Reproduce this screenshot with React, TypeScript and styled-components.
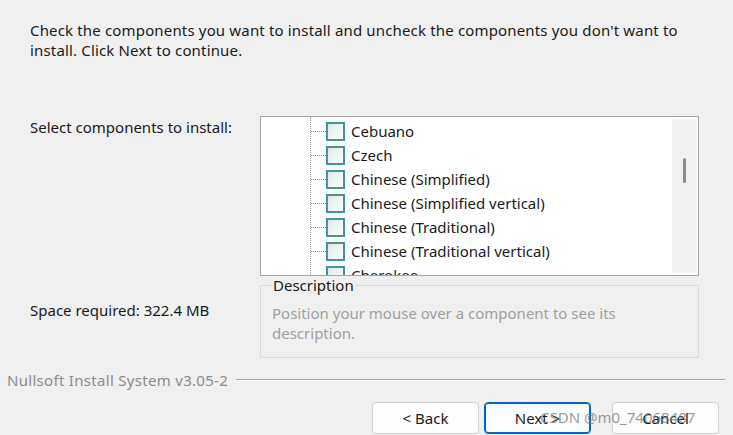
import * as React from 'react';
import styled, { createGlobalStyle } from 'styled-components';

const GlobalStyle = createGlobalStyle`
  html, body {
    margin: 0;
    padding: 0;
    background: #f0f0f0;
  }
  * {
    box-sizing: border-box;
  }
`;

const Window = styled.div`
  position: relative;
  width: 733px;
  height: 435px;
  overflow: hidden;
  background: #f0f0f0;
  font-family: 'Noto Sans', 'Liberation Sans', Arial, sans-serif;
  font-size: 15px;
  color: #1a1a1a;
`;

const Intro = styled.p`
  margin: 0;
  padding: 20px 40px 0 30px;
  line-height: 20px;
  letter-spacing: 0.16px;
`;

const Components = styled.div`
  display: grid;
  grid-template-columns: 230px 439px;
  grid-template-rows: 160px 82px;
  margin: 56px 0 0 30px;
`;

const SideLabel = styled.div<{ $top: number }>`
  padding-top: ${(p) => p.$top}px;
  line-height: 20px;
`;

const ListBox = styled.div`
  display: flex;
  border: 1px solid #a5a5a5;
  background: #ffffff;
  overflow: hidden;
`;

const Tree = styled.div`
  flex: 1;
  position: relative;
  padding: 2px 0 0 0;
`;

const TreeTrunk = styled.div`
  position: absolute;
  left: 49px;
  top: 0;
  bottom: 0;
  border-left: 1px dotted #9a9a9a;
`;

const Row = styled.div`
  display: flex;
  align-items: center;
  height: 24px;
  padding-left: 50px;
  white-space: nowrap;
`;

const Branch = styled.span`
  width: 15px;
  border-top: 1px dotted #9a9a9a;
`;

const Check = styled.span`
  width: 19px;
  height: 19px;
  border: 2px solid #3a9c96;
  background: linear-gradient(135deg, #e4e4e4 0%, #f4f4f4 55%, #ffffff 100%);
  margin-right: 6px;
  flex-shrink: 0;
`;

const ScrollTrack = styled.div`
  width: 25px;
  margin: 2px 1px 2px 0;
  background: #f0f0f0;
  display: flex;
  justify-content: center;
  padding-top: 39px;
`;

const ScrollThumb = styled.div`
  width: 3px;
  height: 25px;
  border-radius: 2px;
  background: #8a8a8a;
`;

const DescriptionBox = styled.fieldset`
  margin: 0;
  padding: 11px 11px 0 11px;
  border: 1px solid #dadada;
  border-radius: 1px;
  min-width: 0;
`;

const Legend = styled.legend`
  padding: 0 1px;
  margin-left: 0;
  line-height: 18px;
  color: #1a1a1a;
`;

const DescriptionText = styled.div`
  color: #a0a0a0;
  line-height: 20px;
  margin-top: -2px;
`;

const BrandRow = styled.div`
  display: flex;
  align-items: center;
  gap: 8px;
  margin: 12px 8px 0 7px;
  color: #8c8c8c;
  line-height: 20px;
  letter-spacing: 0.3px;
  white-space: nowrap;
`;

const Rule = styled.span`
  flex: 1;
  height: 2px;
  border-top: 1px solid #a8a8a8;
  border-bottom: 1px solid #ffffff;
`;

const ButtonRow = styled.div`
  display: flex;
  margin: 12px 0 0 372px;
`;

const Button = styled.button<{ $primary?: boolean; $gap?: number }>`
  width: 107px;
  height: 32px;
  margin-right: ${(p) => p.$gap ?? 0}px;
  font-family: inherit;
  font-size: 15px;
  color: #1a1a1a;
  background: #fdfdfd;
  border: 1px solid ${(p) => (p.$primary ? '#0067c0' : '#d0d0d0')};
  border-radius: 4px;
  box-shadow: ${(p) => (p.$primary ? 'inset 0 0 0 1px #0067c0' : 'none')};
  padding: 0;
`;

const Watermark = styled.div`
  position: absolute;
  left: 540px;
  top: 407px;
  font-size: 15px;
  line-height: 20px;
  color: rgba(120, 120, 120, 0.75);
  white-space: nowrap;
  pointer-events: none;
`;

const languages = [
  'Cebuano',
  'Czech',
  'Chinese (Simplified)',
  'Chinese (Simplified vertical)',
  'Chinese (Traditional)',
  'Chinese (Traditional vertical)',
  'Cherokee',
];

export default function App() {
  return (
    <Window>
      <GlobalStyle />
      <Intro>
        Check the components you want to install and uncheck the components you don't want to
        install. Click Next to continue.
      </Intro>
      <Components>
        <SideLabel $top={1}>Select components to install:</SideLabel>
        <ListBox>
          <Tree>
            <TreeTrunk />
            {languages.map((lang) => (
              <Row key={lang}>
                <Branch />
                <Check />
                {lang}
              </Row>
            ))}
          </Tree>
          <ScrollTrack>
            <ScrollThumb />
          </ScrollTrack>
        </ListBox>
        <SideLabel $top={24}>Space required: 322.4 MB</SideLabel>
        <DescriptionBox>
          <Legend>Description</Legend>
          <DescriptionText>
            Position your mouse over a component to see its
            <br />
            description.
          </DescriptionText>
        </DescriptionBox>
      </Components>
      <BrandRow>
        Nullsoft Install System v3.05-2
        <Rule />
      </BrandRow>
      <ButtonRow>
        <Button $gap={5}>&lt; Back</Button>
        <Button $primary $gap={21}>Next &gt;</Button>
        <Button>Cancel</Button>
      </ButtonRow>
      <Watermark>CSDN @m0_74068487</Watermark>
    </Window>
  );
}
